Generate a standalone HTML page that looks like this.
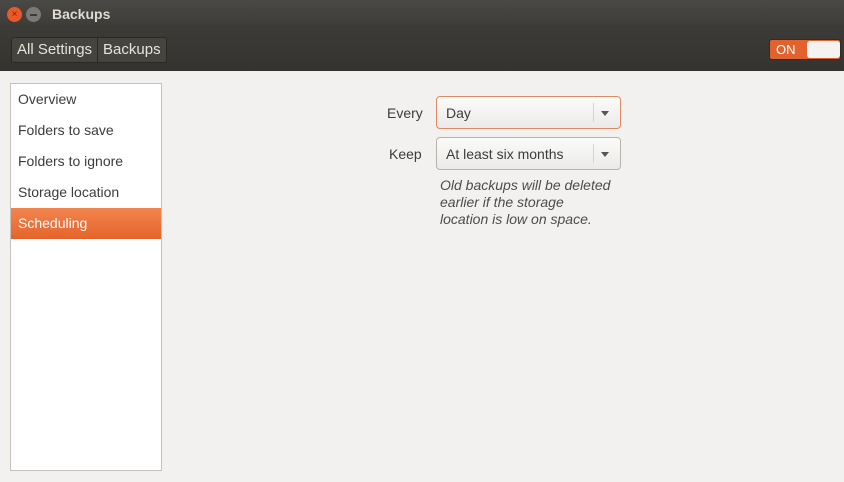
<!DOCTYPE html>
<html><head><style>
*{margin:0;padding:0;box-sizing:border-box}
body{width:844px;height:482px;overflow:hidden;background:#f2f1f0;font-family:"Liberation Sans",sans-serif;font-size:14px;color:#3c3c3c;position:relative}
.hdr{position:absolute;left:0;top:0;width:844px;height:71px;background:linear-gradient(#4a4945,#3c3b37 40%,#34332f)}
.title{position:absolute;left:52px;top:6px;color:#dfdbd2;font-weight:bold;font-size:14px}
.btnc{position:absolute;left:7px;top:7px;width:15px;height:15px;border-radius:50%;background:#e9592a;color:#6b2a10;font-size:10px;text-align:center;line-height:15px}
.btnm{position:absolute;left:26px;top:7px;width:15px;height:15px;border-radius:50%;background:#7b7a76}
.btnm:after{content:"";position:absolute;left:4px;top:7px;width:7px;height:1.5px;background:#3c3b37}
.crumb{position:absolute;left:11px;top:37px;height:26px;border:1px solid #2a2926;border-radius:3px;background:#45443f;display:flex;color:#e6e3dc;font-size:15px}
.crumb span{padding:0 5px;line-height:24px}
.crumb span+span{border-left:1px solid #2a2926}
.sw{position:absolute;left:769px;top:39px;width:72px;height:21px;border-radius:3px;background:#e2622e;border:1px solid #2e2d2a}
.sw .on{position:absolute;left:6px;top:2px;color:#fff;font-size:13px}
.sw .k{position:absolute;left:37px;top:1px;width:33px;height:17px;border-radius:3px;background:#f4f3f1}
.side{position:absolute;left:10px;top:83px;width:152px;height:388px;background:#fff;border:1px solid #c4c2bd}
.side div{height:31px;line-height:31px;padding-left:7px;color:#3c3c3c}
.side .sel{background:linear-gradient(#f2854f,#e4642b);color:#fff}
.lbl{position:absolute;font-size:14px;color:#3c3c3c}
.cb{position:absolute;left:436px;width:185px;height:33px;border:1px solid #b6b3ad;border-radius:4px;background:linear-gradient(#fbfbfa,#ebeae8);padding-left:9px;line-height:32px}
.cb:after{content:"";position:absolute;right:11px;top:14px;border-left:4px solid transparent;border-right:4px solid transparent;border-top:5px solid #555}
.cb .sep{position:absolute;right:26px;top:6px;height:19px;border-left:1px solid #d6d4d0}
.note{position:absolute;left:440px;top:177px;font-style:italic;color:#4c4c4c;line-height:17px;font-size:14px}
</style></head><body>
<div class="hdr">
<div class="btnc">×</div><div class="btnm"></div>
<div class="title">Backups</div>
<div class="crumb"><span>All Settings</span><span>Backups</span></div>
<div class="sw"><span class="on">ON</span><div class="k"></div></div>
</div>
<div class="side">
<div>Overview</div><div>Folders to save</div><div>Folders to ignore</div><div>Storage location</div><div class="sel">Scheduling</div>
</div>
<div class="lbl" style="left:387px;top:105px">Every</div>
<div class="cb" style="top:96px;border-color:#e08a65">Day<div class="sep"></div></div>
<div class="lbl" style="left:389px;top:146px">Keep</div>
<div class="cb" style="top:137px">At least six months<div class="sep"></div></div>
<div class="note">Old backups will be deleted<br>earlier if the storage<br>location is low on space.</div>
</body></html>
